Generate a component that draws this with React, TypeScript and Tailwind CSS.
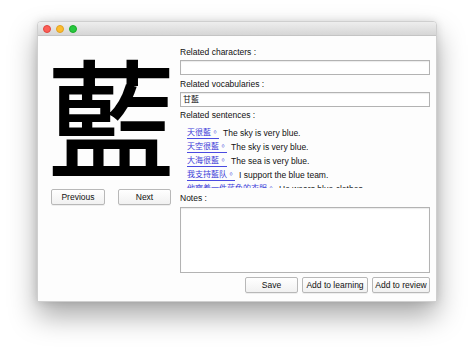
import React from "react";

const sans = { fontFamily: '"Liberation Sans", "Noto Sans CJK TC", sans-serif' };

const sentences: [string, string][] = [
  ["天很藍。", "The sky is very blue."],
  ["天空很藍。", "The sky is very blue."],
  ["大海很藍。", "The sea is very blue."],
  ["我支持藍队。", "I support the blue team."],
  ["他穿着一件蓝色的衣服。", "He wears blue clothes."],
];

function Btn({ label, w }: { label: string; w: string }) {
  return (
    <div
      className={`${w} h-[16px] flex items-center justify-center rounded-[2px] border border-[#b8b8b8] bg-gradient-to-b from-[#ffffff] to-[#f1f1f1] text-[8.5px] text-[#111] shadow-[0_1px_0_rgba(0,0,0,0.06)]`}
    >
      {label}
    </div>
  );
}

export default function App() {
  return (
    <div className="w-[474px] h-[355px] bg-white pl-[37px] pt-[21px] overflow-hidden" style={sans}>
      <div className="w-[400px] h-[281px] flex flex-col rounded-t-[4px] overflow-hidden bg-[#fdfdfd] border border-[#cfcfcf] shadow-[0_14px_28px_rgba(0,0,0,0.34),0_0_8px_rgba(0,0,0,0.12)]">
        <div className="h-[14px] shrink-0 flex items-center gap-[5px] pl-[5px] bg-gradient-to-b from-[#eeeeee] to-[#d6d6d6] border-b border-[#c4c4c4]">
          <div className="w-[8px] h-[8px] rounded-full bg-[#fc5f57] border-[0.5px] border-[#e0443e]" />
          <div className="w-[8px] h-[8px] rounded-full bg-[#fdbc2e] border-[0.5px] border-[#dea123]" />
          <div className="w-[8px] h-[8px] rounded-full bg-[#28c840] border-[0.5px] border-[#1aab29]" />
        </div>
        <div className="flex flex-1">
          <div className="w-[142px] shrink-0 pl-[13px] flex flex-col">
            <div className="w-[120px] h-[153px] pt-[2px] flex items-center justify-center overflow-hidden">
              <span
                className="block h-[130px] text-[128px] leading-[130px] font-normal text-black [-webkit-text-stroke:2px_black]"
                style={{ fontFamily: '"Noto Sans CJK JP", "Noto Sans CJK TC", sans-serif' }}
              >
                藍
              </span>
            </div>
            <div className="flex gap-[13px]">
              <Btn label="Previous" w="w-[54px]" />
              <Btn label="Next" w="w-[53px]" />
            </div>
          </div>
          <div className="w-[250px] flex flex-col pt-[10px] pb-[10px] text-[8.5px] text-[#111]">
            <div className="h-[12px] leading-[12px]">Related characters :</div>
            <div className="mt-[2px] h-[15px] border border-[#b3b3b3] bg-white shadow-[inset_0_1px_1px_rgba(0,0,0,0.08)]" />
            <div className="mt-[3px] h-[12px] leading-[12px]">Related vocabularies :</div>
            <div className="mt-[2px] h-[15px] border border-[#b3b3b3] bg-white shadow-[inset_0_1px_1px_rgba(0,0,0,0.08)] flex items-center pl-[2px] text-[8px] text-[#111]">
              甘藍
            </div>
            <div className="mt-[2px] h-[12px] leading-[12px]">Related sentences :</div>
            <div className="h-[67px] overflow-hidden pt-[5px] pl-[7px]">
              {sentences.map(([zh, en], i) => (
                <div key={i} className="h-[14px] flex items-center whitespace-nowrap">
                  <span className="text-[8px] text-[#3a3ad8] underline underline-offset-[3px] decoration-[#4a4ae0]">
                    {zh}
                  </span>
                  <span className="ml-[4px] text-[8.5px] text-[#111]">{en}</span>
                </div>
              ))}
            </div>
            <div className="mt-[4px] h-[12px] leading-[12px]">Notes :</div>
            <div className="mt-[3px] h-[66px] border border-[#b3b3b3] bg-white shadow-[inset_0_1px_1px_rgba(0,0,0,0.08)]" />
            <div className="mt-[4px] flex justify-end gap-[4px]">
              <Btn label="Save" w="w-[53px]" />
              <Btn label="Add to learning" w="w-[66px]" />
              <Btn label="Add to review" w="w-[58px]" />
            </div>
          </div>
        </div>
      </div>
    </div>
  );
}
